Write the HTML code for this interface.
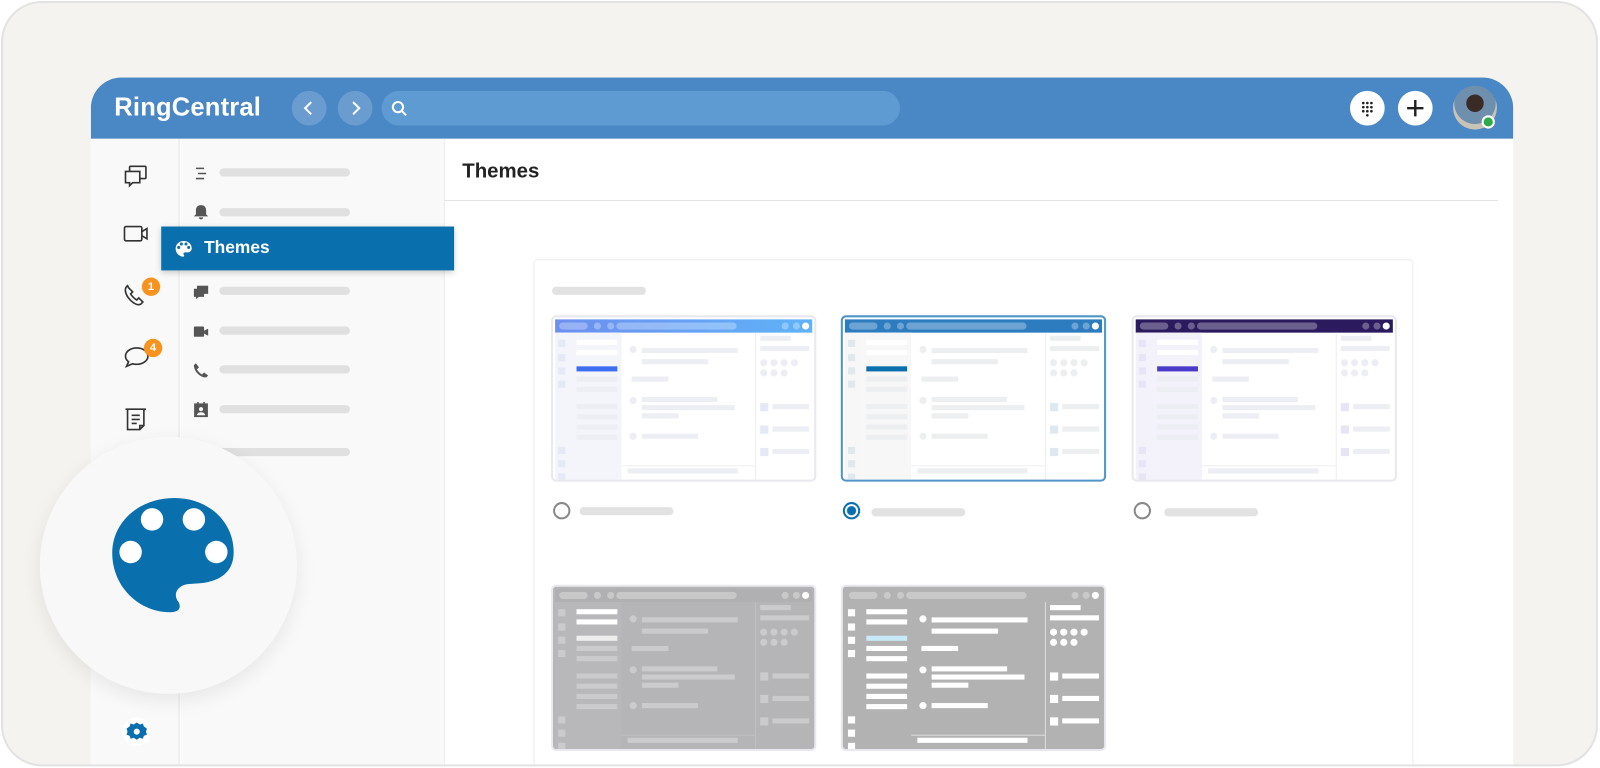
<!DOCTYPE html>
<html><head><meta charset="utf-8"><style>
*{margin:0;padding:0;box-sizing:border-box}
html,body{width:1600px;height:768px;overflow:hidden;background:#fff;font-family:"Liberation Sans",sans-serif}
#w{position:absolute;left:0;top:0;width:1568px;height:753px;transform:scale(1.0204);transform-origin:0 0;overflow:hidden}
q::before,q::after{content:none}
.frame{position:absolute;left:1px;top:1px;width:1565px;height:750px;border:2px solid #e2e2e2;border-radius:40px;background:#f4f3ef;overflow:hidden}
.app{position:absolute;left:86px;top:73px;width:1394px;height:700px;background:#fff;border-radius:30px 30px 0 0;overflow:hidden}
.hdr{position:absolute;left:0;top:0;width:100%;height:60px;background:#4a87c5}
.logo{position:absolute;left:23px;top:15px;color:#fff;font-size:25px;font-weight:bold;letter-spacing:.2px}
.nb{position:absolute;top:13px;width:34px;height:34px;border-radius:50%;background:rgba(255,255,255,.18)}
.srch{position:absolute;left:285px;top:13px;width:508px;height:34px;border-radius:17px;background:#5f9bd3}
.wc{position:absolute;top:13px;width:34px;height:34px;border-radius:50%;background:#fff}
.rail{position:absolute;left:0;top:60px;width:87px;height:640px;background:#f9f9f9;border-right:1px solid #e3e3e3}
.side{position:absolute;left:88px;top:60px;width:259px;height:640px;background:#f9f9f9;border-right:1px solid #ececec}
.ri{position:absolute;left:31px}
.badge{position:absolute;width:18px;height:18px;border-radius:50%;background:#f7931e;color:#fff;font-size:11px;font-weight:bold;text-align:center;line-height:18px}
.si{position:absolute;left:100px;width:16px;height:16px}
.sb{position:absolute;left:126px;width:128px;height:8px;border-radius:4px;background:#e0e0e0}
.main{position:absolute;left:347px;top:60px;right:0;height:640px;background:#fff}
.title{position:absolute;left:17px;top:21px;font-size:20px;font-weight:bold;color:#222}
.div{position:absolute;left:0;top:60px;width:1032px;height:1px;background:#e3e3e3}
.card{position:absolute;left:87px;top:118px;width:862px;height:600px;border:1px solid #eee;border-radius:4px;box-shadow:0 1px 4px rgba(0,0,0,.05)}
.th{position:absolute;width:260px;height:163px;border:2px solid #e8e8ee;border-radius:5px;overflow:hidden;background:var(--bg)}
.th .h{position:absolute;left:2px;top:2px;right:2px;height:13px;background:var(--hd)}
.th .h i{position:absolute;top:3px;height:7px;border-radius:4px;background:rgba(255,255,255,.3)}
.th .h b{position:absolute;top:3px;width:7px;height:7px;border-radius:50%;background:rgba(255,255,255,.3)}
.th .rl{position:absolute;left:2px;top:15px;width:18px;bottom:0;background:var(--rail)}
.th .sd{position:absolute;left:20px;top:15px;width:47px;bottom:0;background:var(--side)}
.th .rt{position:absolute;left:198px;top:15px;width:1px;bottom:0;background:var(--ln)}
.th .ft{position:absolute;left:67px;top:145px;width:131px;height:1px;background:var(--ln)}
.th u{position:absolute;height:5px;background:var(--bar);text-decoration:none}
.th s{position:absolute;width:7px;height:7px;border-radius:50%;background:var(--bar);text-decoration:none}
.th q{position:absolute;width:7px;height:7px;background:var(--rb)}
.rad{position:absolute;width:17px;height:17px;border-radius:50%;border:2px solid #888}
.rl2{position:absolute;width:92px;height:8px;border-radius:4px;background:#e2e2e2}
.big{position:absolute;left:39px;top:428px;width:252px;height:252px;border-radius:50%;background:#f8f8f8;box-shadow:0 6px 20px rgba(0,0,0,.08)}
.hl{position:absolute;left:158px;top:222px;width:287px;height:43px;background:#0a6fad;box-shadow:0 2px 6px rgba(0,0,0,.2);color:#fff;font-size:17px;font-weight:bold}
</style></head><body><div id="w">
<div class="frame">
<div class="app">
 <div class="hdr">
  <div class="logo">RingCentral</div>
  <div class="nb" style="left:197px"><svg width="34" height="34"><path d="M19 11l-6 6 6 6" fill="none" stroke="#fff" stroke-width="2"/></svg></div>
  <div class="nb" style="left:242px"><svg width="34" height="34"><path d="M15 11l6 6-6 6" fill="none" stroke="#fff" stroke-width="2"/></svg></div>
  <div class="srch"><svg width="34" height="34"><circle cx="16" cy="16" r="5" fill="none" stroke="#fff" stroke-width="2"/><path d="M20 20l4 4" stroke="#fff" stroke-width="2"/></svg></div>
  <div class="wc" style="left:1234px"><svg width="34" height="34"><g fill="#222"><circle cx="13" cy="12" r="1.3"/><circle cx="17" cy="12" r="1.3"/><circle cx="21" cy="12" r="1.3"/><circle cx="13" cy="16" r="1.3"/><circle cx="17" cy="16" r="1.3"/><circle cx="21" cy="16" r="1.3"/><circle cx="13" cy="20" r="1.3"/><circle cx="17" cy="20" r="1.3"/><circle cx="21" cy="20" r="1.3"/><circle cx="17" cy="24" r="1.3"/></g></svg></div>
  <div class="wc" style="left:1281px"><svg width="34" height="34"><path d="M17 9v16M9 17h16" stroke="#222" stroke-width="2.4"/></svg></div>
  <div style="position:absolute;left:1335px;top:8px;width:43px;height:43px;border-radius:50%;background:radial-gradient(circle at 50% 40%,#3b2b26 0 25%,#6f8fae 26% 60%,#c9c3b6 61%)"></div>
  <div style="position:absolute;left:1363px;top:37px;width:13px;height:13px;border-radius:50%;background:#2eaa4a;border:2px solid #fff"></div>
 </div>
 <div class="rail">
  <svg class="ri" style="top:25px" width="26" height="24" fill="none" stroke="#333" stroke-width="1.6"><rect x="7" y="2" width="16" height="12" rx="1"/><path d="M3 7h14v11H10l-3 3v-3H3z" fill="#f9f9f9"/></svg>
  <svg class="ri" style="top:82px" width="28" height="22" fill="none" stroke="#333" stroke-width="1.6"><rect x="2" y="4" width="17" height="14" rx="1.5"/><path d="M19 9l5-3v10l-5-3"/></svg>
  <svg class="ri" style="top:141px" width="26" height="26" fill="none" stroke="#333" stroke-width="1.6"><path d="M5 3c-3 2-3 7 1 12s9 8 12 6l2-2-4-4-2 2c-2-1-5-4-6-6l2-2-4-4z"/></svg>
  <div class="badge" style="left:50px;top:136px">1</div>
  <svg class="ri" style="top:201px" width="28" height="26" fill="none" stroke="#333" stroke-width="1.6"><path d="M14 4c6 0 11 3.5 11 8s-5 8-11 8c-2 0-3 0-4-.5L4 22l2-4.5C4 16 3 14 3 12c0-4.5 5-8 11-8z"/></svg>
  <div class="badge" style="left:52px;top:196px">4</div>
  <svg class="ri" style="top:262px" width="26" height="26" fill="none" stroke="#333" stroke-width="1.6"><path d="M3 3h20M5 3v20h12l4-4V3M9 9h8M9 13h8M9 17h5M17 23v-4h4"/></svg>
  <svg style="position:absolute;left:30px;top:566px" width="30" height="30"><circle cx="15" cy="15" r="14" fill="#fff"/><path d="M15 6l3 2 3-1 1 3 3 2-1 3 1 3-3 1-1 3-3-1-3 2-3-2-3 1-1-3-3-1 1-3-1-3 3-2 1-3 3 1z" fill="#0a6fad"/><circle cx="15" cy="15" r="3" fill="#fff"/></svg>
 </div>
 <div class="side">
  <svg class="si" style="left:12px;top:26px" viewBox="0 0 16 16" stroke="#555" stroke-width="1.5"><path d="M3 3h8M5 8h8M3 13h8"/></svg><div class="sb" style="left:38px;top:29px"></div>
  <svg class="si" style="left:12px;top:64px" viewBox="0 0 16 16" fill="#555"><path d="M8 1c3 0 5 2 5 5v4l2 2H1l2-2V6c0-3 2-5 5-5zM6 13h4a2 2 0 01-4 0z"/></svg><div class="sb" style="left:38px;top:68px"></div>
  <svg class="si" style="left:12px;top:142px" viewBox="0 0 16 16" fill="#555"><rect x="4" y="2" width="11" height="8"/><path d="M1 5h10v8H6l-3 2v-2H1z"/></svg><div class="sb" style="left:38px;top:145px"></div>
  <svg class="si" style="left:12px;top:181px" viewBox="0 0 16 16" fill="#555"><rect x="1" y="3" width="10" height="10" rx="1"/><path d="M11 7l4-2v7l-4-2z"/></svg><div class="sb" style="left:38px;top:184px"></div>
  <svg class="si" style="left:12px;top:219px" viewBox="0 0 16 16" fill="#555"><path d="M3 1l3 4-2 2c1 2 3 4 5 5l2-2 4 3-2 2C7 15 1 9 1 3z"/></svg><div class="sb" style="left:38px;top:222px"></div>
  <svg class="si" style="left:12px;top:257px" viewBox="0 0 16 16" fill="#555"><path d="M2 3h12v12H2zM5 1v3M11 1v3" stroke="#555" stroke-width="1.5"/><circle cx="8" cy="8" r="2" fill="#f9f9f9"/><path d="M4 14c0-2 2-3 4-3s4 1 4 3z" fill="#f9f9f9"/></svg><div class="sb" style="left:38px;top:261px"></div>
  <div class="sb" style="left:38px;top:303px"></div>
 </div>
 <div class="main">
  <div class="title">Themes</div>
  <div class="div"></div>
  <div class="card">
   <div class="rl2" style="left:17px;top:26px"></div>
   <div class="th" style="left:16px;top:54px;--bg:#fff;--hd:linear-gradient(90deg,#6d8ff0,#5fb3f8);--rail:#f4f5fb;--side:#f4f5fb;--ln:#eee;--bar:#eceef3;--rb:#e5e8f5;--sel:#3d6ef2"></div>
   <div class="th" style="left:300px;top:54px;border-color:#4f95c6;--bg:#fff;--hd:#2d7cc0;--rail:#f7f7f7;--side:#f7f7f7;--ln:#eee;--bar:#eceef0;--rb:#dfe8ef;--sel:#0a6fad"></div>
   <div class="th" style="left:585px;top:54px;--bg:#fff;--hd:#2c1a5e;--rail:#f3f2fb;--side:#f3f2fb;--ln:#eee;--bar:#eceef3;--rb:#e6e4f5;--sel:#4a3ac8"></div>
   <div class="th" style="left:16px;top:318px;--bg:#b5b5b7;--hd:#b0b0b2;--rail:#b8b8ba;--side:#b8b8ba;--ln:#c0c0c2;--bar:#cbcbcd;--rb:#cbcbcd;--sel:#eee"></div>
   <div class="th" style="left:300px;top:318px;--bg:#b2b2b2;--hd:#b2b2b2;--rail:#b2b2b2;--side:#b2b2b2;--ln:#ddd;--bar:#fff;--rb:#fff;--sel:#c8eaf8"></div>
   <div class="rad" style="left:18px;top:237px"></div><div class="rl2" style="left:44px;top:242px"></div>
   <div class="rad" style="left:302px;top:237px;border-color:#0a6fad;background:radial-gradient(circle,#0a6fad 0 4px,#fff 5px)"></div><div class="rl2" style="left:330px;top:243px"></div>
   <div class="rad" style="left:587px;top:237px"></div><div class="rl2" style="left:617px;top:243px"></div>
  </div>
 </div>
</div>
</div>
<div class="hl"><svg style="position:absolute;left:13px;top:13px" width="18" height="18" viewBox="0 0 48 48"><path d="M24 3C12 3 3 12 3 23c0 11 9 21 20 21 3 0 3-3 1-5-2-3 0-6 4-6h5c8 0 12-5 12-11C45 11 36 3 24 3z" fill="#fff"/><g fill="#0a6fad"><circle cx="11" cy="20" r="4"/><circle cx="18" cy="11" r="4"/><circle cx="30" cy="11" r="4"/><circle cx="37" cy="20" r="4"/></g></svg><span style="position:absolute;left:42px;top:11px">Themes</span></div>
<div class="big"><svg style="position:absolute;left:70px;top:58px" width="122" height="122" viewBox="0 0 122 122"><path d="M62 2C28 2 1 25 1 56c0 32 25 58 57 58 8 0 11-4 8-10-5-6-3-14 6-17 4-1 14-1 20-2 17-3 28-12 28-30C120 25 95 2 62 2z" fill="#0a6fad"/><g fill="#fff"><circle cx="19" cy="55" r="11"/><circle cx="40" cy="23" r="11"/><circle cx="81" cy="23" r="11"/><circle cx="103" cy="55" r="11"/></g></svg></div>
</div>
<script>
var tpl='<div class="h"><i style="left:4px;width:28px"></i><b style="left:38px"></b><b style="left:51px"></b><i style="left:60px;width:118px"></i><b style="left:222px"></b><b style="left:233px"></b><b style="left:242px;background:#fff"></b></div><div class="rl"></div><div class="sd"></div><div class="rt"></div><div class="ft"></div>'+
'<q style="left:5px;top:22px"></q><q style="left:5px;top:36px"></q><q style="left:5px;top:49px"></q><q style="left:5px;top:62px"></q><q style="left:5px;top:127px"></q><q style="left:5px;top:140px"></q><q style="left:5px;top:153px"></q>'+
'<u style="left:23px;top:22px;width:40px;background:#fff"></u><u style="left:23px;top:32px;width:40px;background:#fff"></u><u style="left:23px;top:48px;width:40px;background:var(--sel)"></u><u style="left:23px;top:58px;width:40px"></u><u style="left:23px;top:68px;width:40px"></u><u style="left:23px;top:85px;width:40px"></u><u style="left:23px;top:95px;width:40px"></u><u style="left:23px;top:105px;width:40px"></u><u style="left:23px;top:115px;width:40px"></u>'+
'<s style="left:75px;top:28px"></s><u style="left:87px;top:30px;width:94px"></u><u style="left:87px;top:41px;width:65px"></u><u style="left:77px;top:58px;width:36px"></u><s style="left:75px;top:78px"></s><u style="left:87px;top:78px;width:74px"></u><u style="left:87px;top:86px;width:91px"></u><u style="left:87px;top:94px;width:36px"></u><s style="left:75px;top:113px"></s><u style="left:87px;top:114px;width:55px"></u><u style="left:73px;top:148px;width:108px"></u>'+
'<u style="left:203px;top:18px;width:30px"></u><u style="left:203px;top:28px;width:48px"></u><s style="left:203px;top:41px"></s><s style="left:213px;top:41px"></s><s style="left:223px;top:41px"></s><s style="left:233px;top:41px"></s><s style="left:203px;top:51px"></s><s style="left:213px;top:51px"></s><s style="left:223px;top:51px"></s>'+
'<q style="left:203px;top:84px;width:8px;height:8px"></q><u style="left:215px;top:85px;width:36px"></u><q style="left:203px;top:106px;width:8px;height:8px"></q><u style="left:215px;top:107px;width:36px"></u><q style="left:203px;top:128px;width:8px;height:8px"></q><u style="left:215px;top:129px;width:36px"></u>';
document.querySelectorAll('.th').forEach(function(e){e.innerHTML=tpl});
</script>
</body></html>
